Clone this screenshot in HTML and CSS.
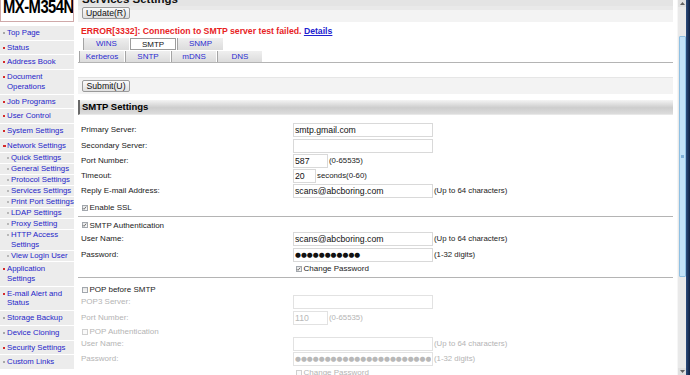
FILE: index.html
```html
<!DOCTYPE html>
<html lang="en">
<head>
<meta charset="utf-8">
<title>Services Settings</title>
<link rel="stylesheet" href="styles.css">
</head>
<body>
<div class="window">
  <aside class="side">
    <div class="logo"><span class="logo-text">MX-M354N</span></div>
    <ul class="nav">
      <li class="item">Top Page</li>
      <li class="item parent">Status</li>
      <li class="item parent">Address Book</li>
      <li class="item parent">Document Operations</li>
      <li class="item parent">Job Programs</li>
      <li class="item parent">User Control</li>
      <li class="item parent">System Settings</li>
      <li class="item parent open">Network Settings</li>
      <li class="subitem">Quick Settings</li>
      <li class="subitem">General Settings</li>
      <li class="subitem">Protocol Settings</li>
      <li class="subitem">Services Settings</li>
      <li class="subitem">Print Port Settings</li>
      <li class="subitem">LDAP Settings</li>
      <li class="subitem">Proxy Setting</li>
      <li class="subitem">HTTP Access Settings</li>
      <li class="subitem">View Login User</li>
      <li class="item parent">Application Settings</li>
      <li class="item parent">E-mail Alert and Status</li>
      <li class="item">Storage Backup</li>
      <li class="item">Device Cloning</li>
      <li class="item parent">Security Settings</li>
      <li class="item">Custom Links</li>
    </ul>
  </aside>

  <main class="main">
    <div class="title-row">
      <h1 class="title">Services Settings</h1>
      <span class="head-btn"></span>
    </div>
    <div class="toolbar"><button class="btn">Update(R)</button></div>
    <p class="error">ERROR[3332]: Connection to SMTP server test failed. <a href="#" class="details">Details</a></p>
    <div class="tabs tabs-top">
      <a class="tab" href="#">WINS</a><a class="tab active" href="#">SMTP</a><a class="tab" href="#">SNMP</a>
    </div>
    <div class="tabs tabs-bottom">
      <a class="tab" href="#">Kerberos</a><a class="tab" href="#">SNTP</a><a class="tab" href="#">mDNS</a><a class="tab" href="#">DNS</a>
    </div>
    <div class="submit-bar"><button class="btn">Submit(U)</button></div>

    <h2 class="sec-head">SMTP Settings</h2>

    <div class="sec sec-server">
      <div class="row row-first"><span class="lbl">Primary Server:</span><input class="inp" value="smtp.gmail.com"></div>
      <div class="row"><span class="lbl">Secondary Server:</span><input class="inp" value=""></div>
      <div class="row"><span class="lbl">Port Number:</span><input class="inp inp-port" value="587"><span class="hint">(0-65535)</span></div>
      <div class="row"><span class="lbl">Timeout:</span><input class="inp inp-time" value="20"><span class="hint">seconds(0-60)</span></div>
      <div class="row"><span class="lbl">Reply E-mail Address:</span><input class="inp" value="scans@abcboring.com"><span class="hint">(Up to 64 characters)</span></div>
      <div class="cbrow cb-ssl"><span class="cb on"><svg viewBox="0 0 6 6" width="6" height="6"><path d="M1 3.2 L2.4 4.6 L5 1.4" fill="none" stroke="#555" stroke-width="1"/></svg></span>Enable SSL</div>
    </div>

    <div class="sec sec-auth">
      <div class="cbrow cb-head"><span class="cb on"><svg viewBox="0 0 6 6" width="6" height="6"><path d="M1 3.2 L2.4 4.6 L5 1.4" fill="none" stroke="#555" stroke-width="1"/></svg></span>SMTP Authentication</div>
      <div class="row row-first"><span class="lbl">User Name:</span><input class="inp" value="scans@abcboring.com"><span class="hint">(Up to 64 characters)</span></div>
      <div class="row"><span class="lbl">Password:</span><input class="inp inp-pw" value="●●●●●●●●●●●"><span class="hint">(1-32 digits)</span></div>
      <div class="cbrow cb-change"><span class="cb on"><svg viewBox="0 0 6 6" width="6" height="6"><path d="M1 3.2 L2.4 4.6 L5 1.4" fill="none" stroke="#555" stroke-width="1"/></svg></span>Change Password</div>
    </div>

    <div class="sec sec-pop">
      <div class="cbrow cb-pop"><span class="cb"></span>POP before SMTP</div>
      <div class="row row-first off"><span class="lbl">POP3 Server:</span><input class="inp" value="" disabled></div>
      <div class="row off"><span class="lbl">Port Number:</span><input class="inp inp-port" value="110" disabled><span class="hint">(0-65535)</span></div>
      <div class="cbrow cb-popauth off"><span class="cb"></span>POP Authentication</div>
      <div class="row off"><span class="lbl">User Name:</span><input class="inp" value="" disabled><span class="hint">(Up to 64 characters)</span></div>
      <div class="row off"><span class="lbl">Password:</span><input class="inp inp-pw" value="●●●●●●●●●●●●●●●●●●●●●●●●●●●" disabled><span class="hint">(1-32 digits)</span></div>
      <div class="cbrow cb-change off"><span class="cb"></span>Change Password</div>
    </div>
  </main>

  <div class="vscroll">
    <div class="sb-arrow"><svg viewBox="0 0 5 3" width="5" height="3"><path d="M0 3 L2.5 0 L5 3 Z" fill="#606060"/></svg></div>
    <div class="sb-thumb"><span class="sb-grip"></span></div>
    <div class="sb-arrow sb-down"><svg viewBox="0 0 5 3" width="5" height="3"><path d="M0 0 L2.5 3 L5 0 Z" fill="#606060"/></svg></div>
  </div>
  <div class="frame"></div>
</div>
</body>
</html>
```

FILE: styles.css
```css
* { box-sizing: border-box; margin: 0; padding: 0; }
html, body { width: 690px; height: 375px; overflow: hidden; background: #fff; }
body { font-family: "Liberation Sans", Arial, sans-serif; color: #222; }
ul { list-style: none; }
a { color: inherit; text-decoration: none; }

.window { display: flex; height: 375px; }

/* ---------- sidebar ---------- */
.side { width: 74px; flex: none; }
.logo {
  height: 22px;
  border: 1px solid #cfa9a9;
  border-top: 0;
  overflow: hidden;
  padding-left: 2px;
}
.logo-text {
  display: block;
  font-weight: bold;
  font-size: 18px;
  line-height: 18px;
  letter-spacing: -0.6px;
  margin-top: -2px;
  color: #000;
  white-space: nowrap;
  transform: scaleX(0.82);
  transform-origin: 0 0;
}
.nav { margin-top: 4px; font-size: 7.8px; line-height: 9.7px; color: #2525c9; }
.item {
  display: flex;
  background: #ececec;
  padding: 2px 0;
  margin-bottom: 1px;
}
.item::before {
  content: "";
  flex: none;
  width: 2px;
  height: 2px;
  margin: 4px 2px 0 3px;
  background: #a8a8a8;
}
.item.parent::before { background: #d42a2a; }
.item.open::before { width: 3px; height: 1.5px; margin: 4.5px 1px 0 3px; }
.subitem {
  display: flex;
  background: #ececec;
  line-height: 10px;
  margin-bottom: 1px;
}
.subitem::before {
  content: "";
  flex: none;
  width: 2px;
  height: 2px;
  margin: 4px 2px 0 7px;
  background: #b8b8b8;
}

/* ---------- main ---------- */
.main { width: 595px; margin-left: 4px; flex: none; font-size: 8px; }

.title-row {
  display: flex;
  height: 14px;
  margin-top: -8.5px;
  background: #e4e4e4;
}
.title { font-size: 11.5px; line-height: 14px; font-weight: bold; padding-left: 4px; color: #111; }
.head-btn {
  margin-left: auto;
  margin-right: 3px;
  margin-top: -9px;
  width: 35px;
  height: 14px;
  border: 1px solid #a8a8a8;
  background: #dedede;
}
.toolbar {
  height: 16.5px;
  padding: 1.5px 0 0 4px;
  background: linear-gradient(#e9e9e9 0, #e9e9e9 4.5px, #f3f3f3 4.5px);
}
.btn {
  display: block;
  width: 48px;
  height: 12px;
  padding: 0;
  border: 1px solid #9a9a9a;
  border-radius: 2px;
  background: linear-gradient(#fbfbfb, #e0e0e0);
  font-family: "Liberation Sans", Arial, sans-serif;
  font-size: 8.7px;
  line-height: 10px;
  color: #111;
}
.error {
  margin-top: 3px;
  padding-left: 3px;
  font-size: 8.7px;
  line-height: 12px;
  font-weight: bold;
  color: #e8231f;
}
.details { color: #2020d0; text-decoration: underline; }

.tabs { display: flex; height: 12px; }
.tabs-top { margin-top: 1px; padding-left: 5px; gap: 1px; }
.tabs-bottom { margin-top: 1px; padding-left: 1px; border-bottom: 1px solid #b4b4b4; }
.tab {
  width: 46px;
  height: 12px;
  line-height: 11px;
  text-align: center;
  font-size: 8px;
  color: #2b2bd0;
  background: linear-gradient(#efefef, #dcdcdc);
  border-left: 1px solid #a4a4a4;
}
.tabs-bottom .tab { height: 11px; border-right: 1px solid #fff; }
.tab.active { background: #fff; border: 1px solid #9c9c9c; color: #111; }

.submit-bar {
  margin-top: 14px;
  height: 17px;
  padding: 2px 0 0 4px;
  background: #f3f3f3;
  border-top: 1px solid #e6e6e6;
}

.sec-head {
  margin-top: 6px;
  height: 15px;
  padding-left: 2px;
  border-left: 2px solid #6a6a6a;
  border-bottom: 1px solid #e8e8e8;
  background: linear-gradient(#f4f4f4, #cdcdcd 55%, #dcdcdc);
  font-size: 9.5px;
  line-height: 14px;
  font-weight: bold;
  color: #000;
}

/* ---------- form ---------- */
.sec { border-bottom: 1px solid #b4b4b4; }
.sec-server { padding-top: 8px; }
.sec-auth { padding: 1px 0 3px; }
.sec-pop { padding-top: 6px; border-bottom: 0; }

.row { display: flex; align-items: flex-start; height: 15px; }
.row-first { height: 16px; }
.lbl { flex: none; width: 215px; padding-left: 3px; line-height: 14px; font-size: 8px; color: #222; }
.inp {
  flex: none;
  width: 140px;
  height: 14px;
  padding: 0 1px;
  border: 1px solid #d9d9d9;
  background: #fff;
  font-family: "Liberation Sans", Arial, sans-serif;
  font-size: 8.7px;
  color: #111;
  outline: none;
}
.inp-port { width: 35px; }
.inp-time { width: 23px; }
.inp-pw { font-family: "DejaVu Sans", sans-serif; font-size: 6.8px; letter-spacing: 0; }
.hint { line-height: 14px; font-size: 7.8px; margin-left: 1px; white-space: nowrap; color: #222; }

.cbrow { display: flex; align-items: center; padding-left: 4px; font-size: 8px; color: #222; }
.cb {
  flex: none;
  display: flex;
  width: 6px;
  height: 6px;
  margin-right: 1.5px;
  border: 1px solid #a2a7ad;
  background: linear-gradient(#e6e6e6, #fafafa);
}
.cb svg { display: block; margin: -1px 0 0 -1px; }
.cb-ssl { height: 17px; }
.cb-head { height: 14px; }
.cb-change { height: 11px; padding-left: 218px; }
.cb-pop { height: 11px; }
.cb-popauth { height: 11px; }

.off .lbl, .off .hint, .off.cbrow { color: #b4b4b4; }
.off .inp { color: #b8b8b8; border-color: #e2e2e2; }
.off .cb { border-color: #cfcfcf; background: #fafafa; }

/* ---------- scrollbar / frame ---------- */
.vscroll {
  width: 9px;
  margin-left: 4px;
  flex: none;
  display: flex;
  flex-direction: column;
  background: #e9e9e9;
  border-left: 1px solid #f6f6f6;
}
.sb-arrow {
  height: 7px;
  display: flex;
  align-items: center;
  justify-content: center;
  background: #e0e0e0;
}
.sb-down { margin-top: auto; }
.sb-thumb {
  margin: 29px 0 0 1px;
  width: 7px;
  height: 241px;
  background: #c3e2f7;
  border: 1px solid #8fc0e3;
  border-radius: 1px;
  display: flex;
  align-items: center;
  justify-content: center;
}
.sb-grip { width: 3px; height: 3px; background: #7fb0d8; }
.frame { width: 4px; flex: none; background: linear-gradient(90deg, #2b4c7e, #0f1f3f); }
```
